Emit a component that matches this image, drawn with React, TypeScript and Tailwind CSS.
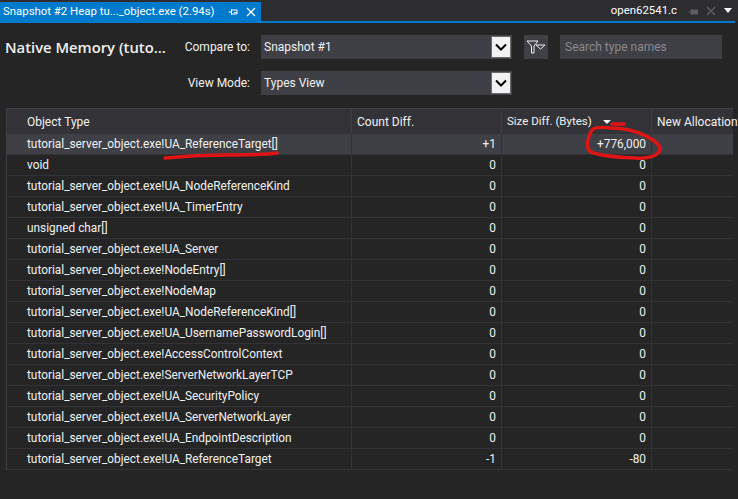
const ROWS = [
  ["tutorial_server_object.exe!UA_ReferenceTarget[]", "+1", "+776,000"],
  ["void", "0", "0"],
  ["tutorial_server_object.exe!UA_NodeReferenceKind", "0", "0"],
  ["tutorial_server_object.exe!UA_TimerEntry", "0", "0"],
  ["unsigned char[]", "0", "0"],
  ["tutorial_server_object.exe!UA_Server", "0", "0"],
  ["tutorial_server_object.exe!NodeEntry[]", "0", "0"],
  ["tutorial_server_object.exe!NodeMap", "0", "0"],
  ["tutorial_server_object.exe!UA_NodeReferenceKind[]", "0", "0"],
  ["tutorial_server_object.exe!UA_UsernamePasswordLogin[]", "0", "0"],
  ["tutorial_server_object.exe!AccessControlContext", "0", "0"],
  ["tutorial_server_object.exe!ServerNetworkLayerTCP", "0", "0"],
  ["tutorial_server_object.exe!UA_SecurityPolicy", "0", "0"],
  ["tutorial_server_object.exe!UA_ServerNetworkLayer", "0", "0"],
  ["tutorial_server_object.exe!UA_EndpointDescription", "0", "0"],
  ["tutorial_server_object.exe!UA_ReferenceTarget", "-1", "-80"],
];

function Chevron() {
  return (
    <div className="flex h-[22px] w-[20px] shrink-0 items-center justify-center border border-[#6a6a6e] bg-[#f2f2f2]">
      <svg width="12" height="8" viewBox="0 0 12 8" fill="none">
        <path d="M1 1.5 L6 6.5 L11 1.5" stroke="#000" strokeWidth="2" />
      </svg>
    </div>
  );
}

function Combo({ label }: { label: string }) {
  return (
    <div className="flex h-[24px] w-[251px] items-center justify-between bg-[#3f3f46] pl-[3px] pr-[1px]">
      <span>{label}</span>
      <Chevron />
    </div>
  );
}

export default function App() {
  return (
    <div className="relative h-[499px] w-[738px] overflow-hidden bg-[#252526] font-['Roboto',sans-serif] text-[12px] text-[#f1f1f1]">
      <div className="flex h-[21px] items-end justify-between bg-[#2d2d30] text-[11.4px]">
        <div className="flex h-[19px] w-[261px] items-center bg-[#007acc] pl-[3px] text-white">
          <span className="w-[225px] whitespace-nowrap">Snapshot #2 Heap tu..._object.exe (2.94s)</span>
          <svg width="10" height="10" viewBox="0 0 10 10" fill="none" stroke="#fff">
            <path d="M0.5 5 H3 M3.5 2 V8 M3.5 3 H9 V7 H3.5 M9 5.5 H6" />
          </svg>
          <svg className="ml-[8px]" width="10" height="10" viewBox="0 0 10 10" fill="none" stroke="#fff" strokeWidth="1.4">
            <path d="M1 1 L9 9 M9 1 L1 9" />
          </svg>
        </div>
        <div className="flex h-[21px] items-center pr-[6px]">
          <span className="text-white">open62541.c</span>
          <svg className="ml-[11px]" width="10" height="10" viewBox="0 0 10 10" fill="#5f5f62" stroke="#5f5f62">
            <path d="M0.5 6 H2.5 M3 3 V9 M3 4 H9.5 V8 H3" />
          </svg>
          <svg className="ml-[8px]" width="10" height="10" viewBox="0 0 10 10" fill="none" stroke="#5f5f62" strokeWidth="1.4">
            <path d="M1 1 L9 9 M9 1 L1 9" />
          </svg>
          <svg className="ml-[8px]" width="8" height="5" viewBox="0 0 8 5" fill="#fff">
            <path d="M0 0 H8 L4 5 Z" />
          </svg>
        </div>
      </div>
      <div className="h-[2px] w-[735px] bg-[#007acc]" />

      <div className="flex items-start pl-[5px] pt-[12px]">
        <div className="w-[176px] pt-[1px] font-['Open_Sans',sans-serif] text-[14.8px] font-semibold leading-[22px] whitespace-nowrap">Native Memory (tuto...</div>
        <div className="flex flex-col gap-[12px]">
          <div className="flex items-center">
            <span className="w-[80px] pr-[11px] text-right whitespace-nowrap">Compare to:</span>
            <Combo label="Snapshot #1" />
            <div className="ml-[12px] flex h-[24px] w-[24px] items-center justify-center bg-[#3f3f46]">
              <svg width="20" height="14" viewBox="0 0 20 14" fill="none" stroke="#f1f1f1">
                <path d="M1 1 H12 L8 6 V13 H5.5 V6 Z M10 5 H19 L14.5 9 Z" />
              </svg>
            </div>
            <div className="ml-[12px] flex h-[24px] w-[162px] items-center bg-[#3f3f46] pl-[5px] text-[#8a8a8f]">Search type names</div>
          </div>
          <div className="flex items-center">
            <span className="w-[80px] pr-[11px] text-right whitespace-nowrap">View Mode:</span>
            <Combo label="Types View" />
          </div>
        </div>
      </div>

      <div className="ml-[6px] mt-[13px] w-[727px] border-l border-t border-[#3f3f46]">
        <div className="flex h-[25px] bg-[#333337] pt-[1px]">
          <div className="flex w-[345px] items-center border-r border-[#3f3f46] pl-[20px]">Object Type</div>
          <div className="flex w-[150px] items-center border-r border-[#3f3f46] pl-[5px]">Count Diff.</div>
          <div className="flex w-[150px] items-center border-r border-[#3f3f46] pl-[5px] text-[11.5px]">
            Size Diff. (Bytes)
            <svg className="ml-[11px]" width="8" height="4" viewBox="0 0 8 4" fill="#f1f1f1">
              <path d="M0 0 H8 L4 4 Z" />
            </svg>
          </div>
          <div className="flex w-[81px] items-center pl-[5px] whitespace-nowrap">New Allocation</div>
        </div>
        {ROWS.map((row, i) => (
          <div key={row[0]} className={`flex h-[21px] border-b border-[#333337] text-[11.85px] ${i === 0 ? "bg-[#3f3f46]" : ""}`}>
            <div className="flex w-[345px] items-center border-r border-[#333337] pl-[20px] pt-[1px] whitespace-nowrap">{row[0]}</div>
            <div className="flex w-[150px] items-center justify-end border-r border-[#333337] pr-[5px] pt-[1px]">{row[1]}</div>
            <div className="flex w-[150px] items-center justify-end border-r border-[#333337] pr-[5px] pt-[1px]">{row[2]}</div>
            <div className="flex-1" />
          </div>
        ))}
      </div>

      {/* red pen marks drawn over the screenshot */}
      <svg className="pointer-events-none absolute left-0 top-0" width="738" height="499" fill="none" stroke="#e01414" strokeWidth="3.5" strokeLinecap="round" strokeLinejoin="round">
        <path d="M165 158 C185 156 200 155 225 155 C245 155 265 155 277 153" />
        <path d="M611 128 C603 127 595 127 592 130 C588 136 586 146 589 150 C592 155 610 157 635 158 C648 159 658 156 660 150 C661 145 652 139 646 136 C636 131 622 128 611 128" />
        <path d="M612 124 H624" />
      </svg>
    </div>
  );
}
